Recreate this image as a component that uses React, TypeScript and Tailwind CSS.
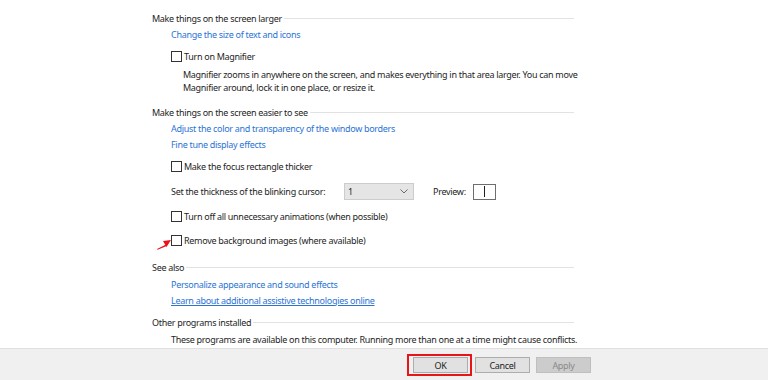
import React from 'react'

const Header = ({ title, className = '' }: { title: string; className?: string }) => (
  <div className={`h-[16px] flex items-center ${className}`}>
    <span className="whitespace-nowrap">{title}</span>
    <div className="flex-1 h-px bg-[#e2e2e2] ml-[2px]" />
  </div>
)

const Link = ({ text, underline, className = '' }: { text: string; underline?: boolean; className?: string }) => (
  <div className={`h-[16px] flex items-center text-[#2a74d4] whitespace-nowrap ${underline ? 'underline' : ''} ${className}`}>
    {text}
  </div>
)

const Check = ({ label, className = '' }: { label: string; className?: string }) => (
  <div className={`h-[16px] flex items-center ${className}`}>
    <span className="w-[11px] h-[11px] border border-[#333333] bg-white shrink-0" />
    <span className="ml-[2px] whitespace-nowrap">{label}</span>
  </div>
)

const Btn = ({ label, disabled }: { label: string; disabled?: boolean }) => (
  <div
    className={`h-[16px] w-[55px] flex items-center justify-center border ${
      disabled ? 'bg-[#cccccc] border-[#bfbfbf] text-[#8a8a8a]' : 'bg-[#e1e1e1] border-[#adadad] text-[#1e1e1e]'
    }`}
  >
    {label}
  </div>
)

export default function App() {
  return (
    <div className="w-[768px] h-[380px] bg-white relative overflow-hidden font-['Segoe_UI','Noto_Sans',sans-serif] text-[9px] tracking-[-0.3px] text-[#1e1e1e] leading-none">
      <div className="h-[348px] pl-[152px] pr-[194px] pt-[10px]">
        {/* Make things on the screen larger */}
        <Header title="Make things on the screen larger" />
        <div className="pl-[19px]">
          <Link text="Change the size of text and icons" />
          <Check label="Turn on Magnifier" className="mt-[6px]" />
          <div className="pl-[12px] mt-[4px] leading-[13px] whitespace-nowrap">
            Magnifier zooms in anywhere on the screen, and makes everything in that area larger. You can move
            <br />
            Magnifier around, lock it in one place, or resize it.
          </div>
        </div>

        {/* Make things on the screen easier to see */}
        <Header title="Make things on the screen easier to see" className="mt-[10px]" />
        <div className="pl-[19px]">
          <Link text="Adjust the color and transparency of the window borders" />
          <Link text="Fine tune display effects" />
          <Check label="Make the focus rectangle thicker" className="mt-[6px]" />
          <div className="h-[17px] mt-[9px] flex items-center">
            <span className="w-[173px] whitespace-nowrap">Set the thickness of the blinking cursor:</span>
            <div className="w-[70px] h-[17px] bg-[#e5e5e5] border border-[#cccccc] flex items-center justify-between pl-[3px] pr-[5px]">
              <span>1</span>
              <svg width="8" height="5" viewBox="0 0 8 5" fill="none">
                <path d="M0.5 0.5 L4 4 L7.5 0.5" stroke="#6b6b6b" strokeWidth="1" />
              </svg>
            </div>
            <span className="ml-[19px]">Preview:</span>
            <div className="ml-[7px] w-[23px] h-[16px] border border-[#6e6e6e] bg-white flex items-center justify-center">
              <div className="w-px h-[11px] bg-[#1e1e1e]" />
            </div>
          </div>
          <Check label="Turn off all unnecessary animations (when possible)" className="mt-[8px]" />
          <div className="relative">
            <Check label="Remove background images (where available)" className="mt-[8px]" />
            <svg className="absolute left-[-15px] top-[6px]" width="18" height="12" viewBox="0 0 18 12">
              <path d="M1 11 L10 6.5 L10.8 8 L1.6 11.8 Z" fill="#e8141a" />
              <path d="M7 3 L15 2 L10.5 9 Z" fill="#e8141a" />
            </svg>
          </div>
        </div>

        {/* See also */}
        <Header title="See also" className="mt-[11px]" />
        <div className="pl-[19px]">
          <Link text="Personalize appearance and sound effects" className="mt-[1px]" />
          <Link text="Learn about additional assistive technologies online" underline />
        </div>

        {/* Other programs installed */}
        <Header title="Other programs installed" className="mt-[6px]" />
        <div className="pl-[19px] h-[16px] mt-[1px] flex items-center whitespace-nowrap">
          These programs are available on this computer. Running more than one at a time might cause conflicts.
        </div>
      </div>

      {/* Button bar */}
      <div className="h-[32px] bg-[#f0f0f0] border-t border-[#dfdfdf] flex items-start justify-end pt-[8px] pr-[177px]">
        <div className="relative">
          <Btn label="OK" />
          <div className="absolute left-[-6px] right-[-4px] top-[-3px] bottom-[-3px] border-2 border-[#e8141a]" />
        </div>
        <div className="ml-[7px]">
          <Btn label="Cancel" />
        </div>
        <div className="ml-[6px]">
          <Btn label="Apply" disabled />
        </div>
      </div>
    </div>
  )
}
